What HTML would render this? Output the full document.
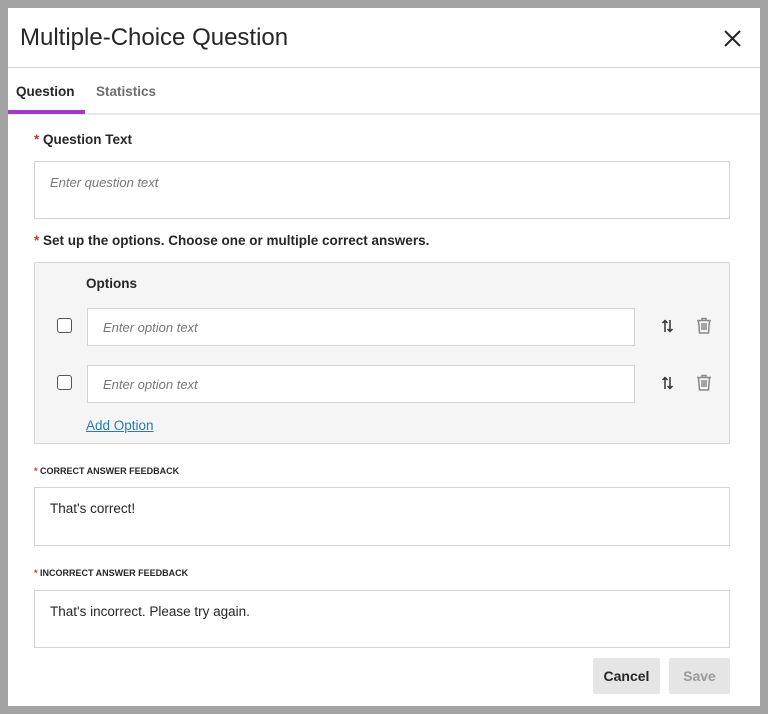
<!DOCTYPE html>
<html><head><style>
*{box-sizing:border-box;margin:0;padding:0}
body{width:768px;height:714px;background:#a3a3a3;font-family:"Liberation Sans",sans-serif;color:#262626;position:relative;overflow:hidden}
.p{position:absolute;left:8px;top:8px;width:752px;height:698px;background:#fff}
.a{position:absolute}
.box{position:absolute;background:#fff;border:1px solid #d4d4d4}
.ph{font-style:italic;color:#777;font-size:13px}
.lbl{font-weight:bold;font-size:13.5px}
.st{color:#c0392b}
.sm{font-weight:bold;font-size:9px}
.cb{position:absolute;width:15px;height:15px;border:1.5px solid #555;border-radius:3px;background:#fff}
.btn{position:absolute;height:36px;background:#e5e5e5;border-radius:2px;font-weight:bold;font-size:14px;text-align:center;line-height:36px}
</style></head><body>
<div class="p"></div>
<div class="a" style="left:20px;top:24px;font-size:24px;color:#262626">Multiple-Choice Question</div>
<svg class="a" style="left:723px;top:29px" width="19" height="19" viewBox="0 0 19 19"><path d="M2 2L17 17M17 2L2 17" stroke="#262626" stroke-width="2"/></svg>
<div class="a" style="left:8px;top:67px;width:752px;height:1px;background:#d4d4d4"></div>
<div class="a lbl" style="left:16px;top:84px;font-size:13.5px">Question</div>
<div class="a lbl" style="left:96px;top:84px;color:#6e6e6e">Statistics</div>
<div class="a" style="left:8px;top:113px;width:752px;height:2px;background:#e8e8e8"></div>
<div class="a" style="left:8px;top:110px;width:77px;height:4px;background:#a13bbf"></div>
<div class="a lbl" style="left:34px;top:132px"><span class="st">* </span>Question Text</div>
<div class="box" style="left:34px;top:161px;width:696px;height:58px"><div class="ph" style="position:absolute;left:15px;top:13px">Enter question text</div></div>
<div class="a lbl" style="left:34px;top:233px"><span class="st">* </span>Set up the options. Choose one or multiple correct answers.</div>
<div class="a" style="left:34px;top:262px;width:696px;height:182px;background:#f5f5f5;border:1px solid #d8d8d8"></div>
<div class="a lbl" style="left:86px;top:276px">Options</div>
<div class="cb" style="left:57px;top:318px"></div>
<div class="box" style="left:87px;top:308px;width:548px;height:38px"><div class="ph" style="position:absolute;left:15px;top:11px">Enter option text</div></div>
<div class="cb" style="left:57px;top:375px"></div>
<div class="box" style="left:87px;top:365px;width:548px;height:38px"><div class="ph" style="position:absolute;left:15px;top:11px">Enter option text</div></div>
<svg class="a" style="left:661px;top:319px" width="13" height="14" viewBox="0 0 13 14"><path d="M4 13V1.5M1.5 4L4 1.5L6.5 4M9 1V12.5M6.5 10L9 12.5L11.5 10" stroke="#333" stroke-width="1.5" fill="none"/></svg>
<svg class="a" style="left:661px;top:376px" width="13" height="14" viewBox="0 0 13 14"><path d="M4 13V1.5M1.5 4L4 1.5L6.5 4M9 1V12.5M6.5 10L9 12.5L11.5 10" stroke="#333" stroke-width="1.5" fill="none"/></svg>
<svg class="a" style="left:696px;top:317px" width="16" height="17" viewBox="0 0 16 17"><path d="M1 3.5H15M6 3.5V1.5H10V3.5M2.5 3.5L3.5 16H12.5L13.5 3.5M6 6V13M8 6V13M10 6V13" stroke="#888" stroke-width="1.5" fill="none"/></svg>
<svg class="a" style="left:696px;top:374px" width="16" height="17" viewBox="0 0 16 17"><path d="M1 3.5H15M6 3.5V1.5H10V3.5M2.5 3.5L3.5 16H12.5L13.5 3.5M6 6V13M8 6V13M10 6V13" stroke="#888" stroke-width="1.5" fill="none"/></svg>
<div class="a" style="left:86px;top:418px;font-size:13.5px;color:#2a7ab8;text-decoration:underline">Add Option</div>
<div class="a sm" style="left:34px;top:466px"><span class="st">* </span>CORRECT ANSWER FEEDBACK</div>
<div class="box" style="left:34px;top:487px;width:696px;height:59px"><div style="position:absolute;left:15px;top:13px;font-size:13.5px">That's correct!</div></div>
<div class="a sm" style="left:34px;top:568px"><span class="st">* </span>INCORRECT ANSWER FEEDBACK</div>
<div class="box" style="left:34px;top:590px;width:696px;height:58px"><div style="position:absolute;left:15px;top:13px;font-size:13.5px">That's incorrect. Please try again.</div></div>
<div class="btn" style="left:593px;top:658px;width:67px;color:#262626">Cancel</div>
<div class="btn" style="left:669px;top:658px;width:61px;color:#9a9a9a">Save</div>
</body></html>
